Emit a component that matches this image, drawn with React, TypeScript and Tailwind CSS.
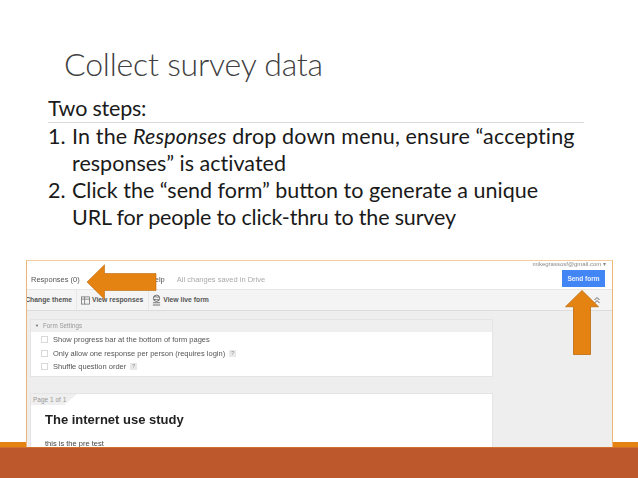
const ARIAL = "font-['Liberation_Sans',Arial,sans-serif]";

function Check({ label, help }: { label: string; help?: boolean }) {
  return (
    <div className="flex h-[13.5px] items-center">
      <span className="mr-[5px] h-[7px] w-[7px] border border-[#d8d8d8] bg-white" />
      <span className="text-[7.5px] text-[#555]">{label}</span>
      {help && (
        <span className="ml-[4px] flex h-[7px] w-[7px] items-center justify-center bg-[#e8e8e8] text-[5px] text-[#888]">
          ?
        </span>
      )}
    </div>
  );
}

function FormShot() {
  return (
    <div className={`relative flex h-[187px] w-[587px] flex-col overflow-hidden border-x border-t border-[#f3cd9f] border-r-[#eeb57a] border-l-[#eeb57a] bg-white ${ARIAL}`}>
      <div className="flex min-h-0 flex-1 flex-col blur-[0.3px]">
        {/* top bar */}
        <div className="relative flex h-[29px] shrink-0 items-end border-b border-[#e6e6e6] pb-[4px] pl-[4px]">
          <span className="text-[7.5px] text-[#555]">Responses (0)</span>
          <span className="ml-[75px] text-[7.5px] text-[#555]">elp</span>
          <span className="ml-[12px] text-[7.5px] text-[#aaa]">All changes saved in Drive</span>
          <span className="absolute right-[6px] top-0 text-[6px] leading-[7px] text-[#888]">mikegrassosf@gmail.com ▾</span>
          <span className="absolute right-[7px] top-[9px] flex h-[17px] w-[43px] items-center justify-center bg-[#4285f4] text-[6.5px] font-bold text-[#e8f0fe]">
            Send form
          </span>
        </div>

        {/* toolbar */}
        <div className="flex h-[21px] shrink-0 items-center border-b border-[#dcdcdc] bg-[#f4f4f4] text-[6.8px] font-bold text-[#555]">
          <span className="flex h-full w-[45px] items-center justify-end overflow-hidden whitespace-nowrap">Change theme</span>
          <div className="ml-[4px] flex h-full items-center border-x border-[#e8e8e8] pl-[4px] pr-[5px]">
            <svg viewBox="0 0 10 10" className="mr-[2px] h-[9px] w-[9px]" fill="none" stroke="#666" strokeWidth="0.8">
              <rect x="0.5" y="1" width="9" height="8" />
              <path d="M0.5 3.5h9M4 1v8" />
            </svg>
            <span>View responses</span>
          </div>
          <div className="ml-[3px] flex items-center">
            <svg viewBox="0 0 10 13" className="mr-[2px] h-[13px] w-[9px]" fill="none" stroke="#555" strokeWidth="0.9">
              <circle cx="5" cy="4" r="3.5" />
              <path d="M2 2.500c2-1 3 1 6 0M2 5.500c2-1 4 1 6 0M1 9h8M1 11.500h8" />
            </svg>
            <span>View live form</span>
          </div>
          <svg viewBox="0 0 8 8" className="ml-auto mr-[11px] h-[8px] w-[8px]" fill="none" stroke="#666" strokeWidth="1">
            <path d="M1.500 4 4 1.500 6.500 4M1.500 7 4 4.500 6.500 7" />
          </svg>
        </div>

        {/* form body */}
        <div className="flex min-h-0 flex-1 flex-col items-start bg-[#eeeeee] pl-[3px] pt-[8px]">
          <div className="h-[58px] w-[463px] shrink-0 border border-[#e4e4e4] bg-white">
            <div className="flex h-[12px] items-center bg-[#efefef] pl-[4px] text-[6.3px] text-[#999]">
              <span className="mr-[4px] text-[4px] text-[#666]">▼</span>
              Form Settings
            </div>
            <div className="pl-[10px] pt-[1px]">
              <Check label="Show progress bar at the bottom of form pages" />
              <Check label="Only allow one response per person (requires login)" help />
              <Check label="Shuffle question order" help />
            </div>
          </div>
          <div className="mt-[16px] h-[60px] w-[463px] shrink-0 border-x border-t border-[#e4e4e4] bg-white">
            <span className="block h-[11px] w-[46px] bg-[#efefef] pl-[2px] text-[6.500px] leading-[11px] text-[#999] [clip-path:polygon(0_0,100%_0,72%_100%,0_100%)]">
              Page 1 of 1
            </span>
            <div className="pl-[14px] pt-[5px] text-[13px] font-bold leading-[20px] text-[#222]">The internet use study</div>
            <div className="pl-[14px] pt-[9px] text-[7.500px] leading-[10px] text-[#444]">this is the pre test</div>
          </div>
        </div>
      </div>

      {/* callout arrows */}
      <svg viewBox="0 0 70 36" className="absolute left-[59px] top-[3px] h-[36px] w-[71px]">
        <path d="M0.500 18 18 0.800V9.500H69.500V26.500H18V35.200Z" fill="#e48312" stroke="#bd6a0e" strokeWidth="0.6" />
      </svg>
      <svg viewBox="0 0 34 66" className="absolute left-[538px] top-[29px] h-[65px] w-[34px]" preserveAspectRatio="none">
        <path d="M17 0.500 33.500 17H25.500V65.500H8.500V17H0.500Z" fill="#e48312" stroke="#bd6a0e" strokeWidth="0.8" />
      </svg>
    </div>
  );
}

export default function App() {
  return (
    <div className="flex h-[478px] w-[638px] flex-col overflow-hidden bg-white font-['Lato',sans-serif]">
      <h1 className="ml-[64px] mt-[45px] h-[38px] text-[32px] font-light leading-[38px] tracking-[-0.2px] text-[#404040]">
        Collect survey data
      </h1>
      <div className="ml-[48px] mt-[12px] w-[536px] text-[21.500px] leading-[27.200px] text-[#1a1a1a]">
        <div className="border-b border-[#d9d9d9] leading-[26.500px] tracking-[-0.2px]">Two steps:</div>
        <ol>
          <li className="flex">
            <span className="w-[24px] shrink-0">1.</span>
            <div>
              <div className="tracking-[0.15px]">
                In the <em>Responses</em> drop down menu, ensure “accepting
              </div>
              <div className="tracking-[0.02px]">responses” is activated</div>
            </div>
          </li>
          <li className="flex">
            <span className="w-[24px] shrink-0">2.</span>
            <div>
              <div className="tracking-[0px]">Click the “send form” button to generate a unique</div>
              <div className="tracking-[-0.16px]">URL for people to click-thru to the survey</div>
            </div>
          </li>
        </ol>
      </div>
      <div className="mt-auto flex h-[218px] flex-col">
        <div className="flex h-[187px] items-end">
          <div className="h-[5px] w-[26px] bg-[#e48312]" />
          <FormShot />
          <div className="h-[5px] flex-1 bg-[#e48312]" />
        </div>
        <div className="flex-1 border-t border-[#d0702e] bg-[#bd582c]" />
      </div>
    </div>
  );
}
